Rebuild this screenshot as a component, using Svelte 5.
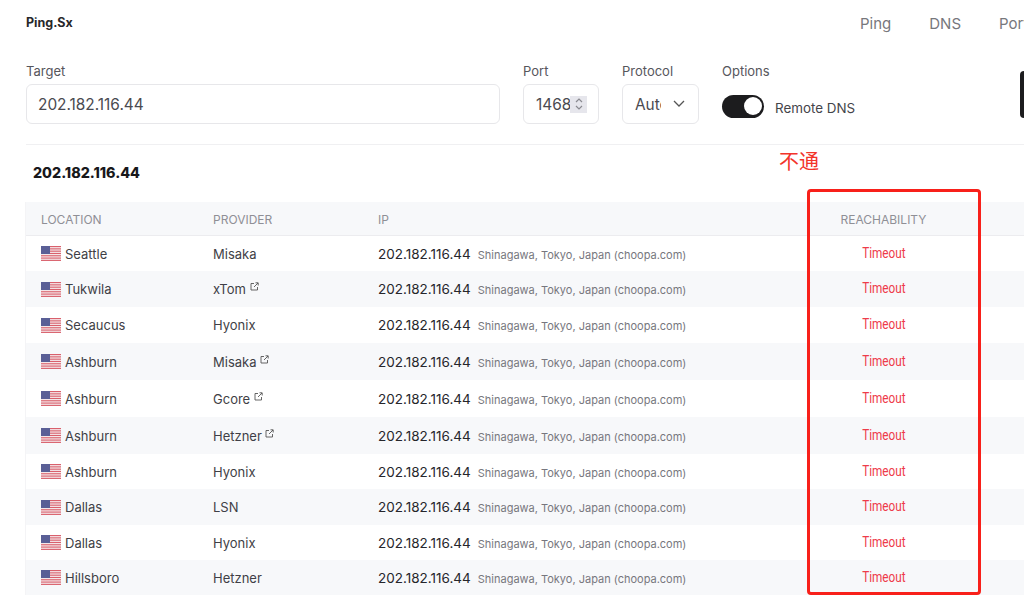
<script>
const rows = [
	{ city: 'Seattle', provider: 'Misaka', link: false, h: 'h35' },
	{ city: 'Tukwila', provider: 'xTom', link: true, h: 'h36' },
	{ city: 'Secaucus', provider: 'Hyonix', link: false, h: 'h36' },
	{ city: 'Ashburn', provider: 'Misaka', link: true, h: 'h37' },
	{ city: 'Ashburn', provider: 'Gcore', link: true, h: 'h37' },
	{ city: 'Ashburn', provider: 'Hetzner', link: true, h: 'h37' },
	{ city: 'Ashburn', provider: 'Hyonix', link: false, h: 'h35' },
	{ city: 'Dallas', provider: 'LSN', link: false, h: 'h36' },
	{ city: 'Dallas', provider: 'Hyonix', link: false, h: 'h35' },
	{ city: 'Hillsboro', provider: 'Hetzner', link: false, h: 'h35' }
];
const stripes = [0, 1, 2, 3, 4, 5, 6];
</script>

<div class="page">
	<header>
		<span class="logo">Ping.Sx</span>
		<nav>
			<span>Ping</span>
			<span>DNS</span>
			<span>Port</span>
		</nav>
	</header>

	<form>
		<div class="field target">
			<span class="label">Target</span>
			<div class="box">202.182.116.44</div>
		</div>
		<div class="field port">
			<span class="label">Port</span>
			<div class="box">
				<span class="clip">1468</span>
				<span class="spin">
					<svg width="10" height="16" viewBox="0 0 10 16" fill="none" stroke="#8a8a90" stroke-width="1.2">
						<path d="M2 6l3-3 3 3M2 10l3 3 3-3" />
					</svg>
				</span>
			</div>
		</div>
		<div class="field proto">
			<span class="label">Protocol</span>
			<div class="box">
				<span class="clip">Auto</span>
				<svg width="12" height="8" viewBox="0 0 12 8" fill="none" stroke="#555" stroke-width="1.3">
					<path d="M1 1l5 5 5-5" />
				</svg>
			</div>
		</div>
		<div class="field options">
			<span class="label">Options</span>
			<div class="opt">
				<span class="toggle"><span class="knob"></span></span>
				<span class="remote">Remote DNS</span>
			</div>
		</div>
		<div class="go"></div>
	</form>

	<div class="rule"></div>

	<div class="result-head">
		<h2>202.182.116.44</h2>
		<span class="note">不通</span>
	</div>

	<div class="table">
		<div class="row head">
			<span class="c1">LOCATION</span>
			<span class="c2">PROVIDER</span>
			<span class="c3">IP</span>
			<span class="c4">REACHABILITY</span>
		</div>
		{#each rows as r}
			<div class="row {r.h}">
				<span class="c1 city">
					<svg class="flag" width="20" height="15" viewBox="0 0 20 15">
						<rect width="20" height="15" fill="#f6eef0" />
						{#each stripes as s}
							<rect y={s * 2.3} width="20" height="1.15" fill="#d9606c" />
						{/each}
						<rect width="9" height="8" fill="#5a5f96" />
					</svg>
					{r.city}
				</span>
				<span class="c2">
					{r.provider}
					{#if r.link}
						<svg class="ext" width="9" height="9" viewBox="0 0 9 9" fill="none" stroke="#555" stroke-width="0.9">
							<path d="M4 1.5H1v6.5h6.5V5M4 5l4-4M5.5 .8H8.2V3.5" />
						</svg>
					{/if}
				</span>
				<span class="c3"><b>202.182.116.44</b><small>Shinagawa, Tokyo, Japan (choopa.com)</small></span>
				<span class="c4 timeout"><i>Timeout</i></span>
			</div>
		{/each}
		<div class="mark"></div>
	</div>
</div>

<style>
:global(body) {
	background: #fff;
	overflow: hidden;
}
.page {
	width: 1024px;
	height: 597px;
	overflow: hidden;
	font-family: Inter, "Noto Sans CJK SC", sans-serif;
	color: #2a2a2e;
}
header {
	display: flex;
	justify-content: space-between;
	align-items: center;
	height: 46px;
	padding-left: 26px;
}
.logo {
	font-size: 12.5px;
	font-weight: 700;
	color: #27272a;
	margin-top: -2px;
}
nav {
	display: flex;
	gap: 38px;
	width: 164px;
	flex: none;
	font-size: 15px;
	color: #77777c;
	white-space: nowrap;
	overflow: hidden;
}
form {
	display: flex;
	padding: 17px 0 0 26px;
	height: 80px;
	box-sizing: border-box;
}
.field {
	display: flex;
	flex-direction: column;
	flex: none;
}
.label {
	font-size: 13px;
	line-height: 16px;
	color: #56565c;
	margin-bottom: 5px;
}
.box {
	height: 40px;
	box-sizing: border-box;
	border: 1px solid #e7e7ea;
	border-radius: 6px;
	display: flex;
	align-items: center;
	font-size: 15.4px;
	color: #4a4a50;
}
.target { width: 474px; margin-right: 23px; }
.target .box { padding-left: 11px; }
.port { width: 76px; margin-right: 23px; }
.port .box { padding-left: 12px; }
.port .clip { width: 34px; }
.proto { width: 77px; margin-right: 23px; }
.proto .box { padding-left: 12px; gap: 12px; }
.proto .clip { width: 26px; }
.clip { display: block; overflow: hidden; white-space: nowrap; }
.spin {
	width: 17px;
	height: 17px;
	background: #e6e6ec;
	display: flex;
	align-items: center;
	justify-content: center;
}
.options { width: 298px; }
.opt {
	display: flex;
	align-items: center;
	gap: 11px;
	height: 24px;
	margin-top: 10px;
}
.toggle {
	width: 42px;
	height: 23px;
	border-radius: 12px;
	background: #1c1c1e;
	display: flex;
	align-items: center;
	justify-content: flex-end;
	padding-right: 2px;
	box-sizing: border-box;
}
.knob {
	width: 18px;
	height: 18px;
	border-radius: 50%;
	background: #fff;
}
.remote { font-size: 13.4px; color: #44444a; padding-top: 4px; }
.go {
	flex: none;
	width: 4px;
	height: 47px;
	margin-top: 8px;
	background: #1c1c1e;
	border-radius: 4px 0 0 4px;
}
.rule {
	height: 1px;
	margin: 18px 0 0 26px;
	background: #f0f0f2;
}
.result-head {
	position: relative;
	height: 57px;
	padding: 0 0 2px 33px;
	box-sizing: border-box;
	display: flex;
	align-items: center;
}
h2 {
	margin: 0;
	font-size: 14.3px;
	font-weight: 800;
	color: #18181b;
}
.note {
	position: absolute;
	left: 779px;
	top: 1px;
	font-size: 20px;
	color: #f2342a;
}
.table {
	position: relative;
	margin-left: 26px;
	box-shadow: -1px 0 #f4f4f6;
}
.row {
	display: flex;
	align-items: center;
	height: 35px;
	font-size: 13px;
	color: #3f3f46;
}
.row:nth-child(odd) { background: #f7f8fa; }
.head {
	height: 34px;
	padding-top: 1px;
	background: #f7f8fa;
	border-bottom: 1px solid #ececef;
	box-sizing: border-box;
	font-size: 12px;
	color: #8f8f96;
}
.h36 { height: 36px; }
.h37 { height: 37px; }
.c1 { width: 187px; padding-left: 15px; box-sizing: border-box; flex: none; }
.c2 { width: 165px; flex: none; }
.c3 { width: 430px; flex: none; white-space: nowrap; }
.c4 { width: 153px; flex: none; text-align: center; margin-left: -1px; }
.city { display: flex; align-items: center; gap: 4px; }
.flag { flex: none; }
.ext { vertical-align: 3px; }
b { font-weight: 400; font-size: 13.5px; color: #26262b; }
small { font-size: 11px; color: #77777e; margin-left: 7px; }
.timeout i {
	display: inline-block;
	font-style: normal;
	font-family: Roboto, sans-serif;
	font-size: 14px;
	color: #ee3b4a;
	transform: translateY(-1px) scaleX(0.84);
}
.mark {
	position: absolute;
	left: 781px;
	top: -13px;
	width: 174px;
	height: 406px;
	border: 3px solid #f8201a;
	border-radius: 4px;
	box-sizing: border-box;
}
</style>
